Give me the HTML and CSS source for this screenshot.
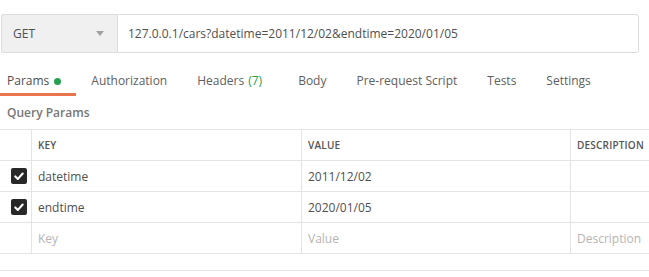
FILE: index.html
```html
<!DOCTYPE html>
<html>
<head>
<meta charset="utf-8">
<link rel="stylesheet" href="styles.css">
</head>
<body>
<div class="page">
  <div class="request-bar">
    <div class="method">
      <span class="method-name">GET</span>
      <span class="caret"></span>
    </div>
    <div class="url">127.0.0.1/cars?datetime=2011/12/02&amp;endtime=2020/01/05</div>
  </div>

  <div class="tabs">
    <div class="tab active">Params <span class="dot"></span></div>
    <div class="tab">Authorization</div>
    <div class="tab tab-headers">Headers <span class="count">(7)</span></div>
    <div class="tab">Body</div>
    <div class="tab">Pre-request Script</div>
    <div class="tab">Tests</div>
    <div class="tab">Settings</div>
  </div>

  <div class="section-title">Query Params</div>

  <div class="table">
    <div class="row head">
      <div class="cell check"></div>
      <div class="cell key">KEY</div>
      <div class="cell value">VALUE</div>
      <div class="cell desc">DESCRIPTION</div>
    </div>
    <div class="row">
      <div class="cell check"><span class="box"><svg viewBox="0 0 16 16" width="16" height="16"><path d="M4.3 8.4 L6.9 10.9 L11.7 5.5" fill="none" stroke="#fff" stroke-width="2.1" stroke-linecap="round" stroke-linejoin="round"/></svg></span></div>
      <div class="cell key">datetime</div>
      <div class="cell value">2011/12/02</div>
      <div class="cell desc"></div>
    </div>
    <div class="row">
      <div class="cell check"><span class="box"><svg viewBox="0 0 16 16" width="16" height="16"><path d="M4.3 8.4 L6.9 10.9 L11.7 5.5" fill="none" stroke="#fff" stroke-width="2.1" stroke-linecap="round" stroke-linejoin="round"/></svg></span></div>
      <div class="cell key">endtime</div>
      <div class="cell value">2020/01/05</div>
      <div class="cell desc"></div>
    </div>
    <div class="row placeholder">
      <div class="cell check"></div>
      <div class="cell key">Key</div>
      <div class="cell value">Value</div>
      <div class="cell desc">Description</div>
    </div>
  </div>
  <div class="bottom-line"></div>
</div>
</body>
</html>
```

FILE: styles.css
```css
* { box-sizing: border-box; }
html, body {
  margin: 0;
  padding: 0;
  background: #fff;
}
body {
  font-family: "Open Sans", "Liberation Sans", sans-serif;
  font-size: 12px;
  color: #505050;
  overflow: hidden;
}
.page {
  width: 649px;
}
.request-bar {
  display: flex;
  margin: 14px 0 0 1px;
  width: 638px;
  height: 39px;
}
.method {
  width: 116px;
  display: flex;
  align-items: center;
  justify-content: space-between;
  padding: 0 12px 0 11px;
  background: #f0f0f0;
  border: 1px solid #dcdcdc;
  border-right: none;
  border-radius: 3px 0 0 3px;
}
.method-name {
  color: #505050;
  font-size: 12px;
}
.caret {
  width: 0;
  height: 0;
  border-left: 4px solid transparent;
  border-right: 4px solid transparent;
  border-top: 5px solid #a0a0a0;
  margin-right: 1px;
}
.url {
  flex: 1;
  display: flex;
  align-items: center;
  padding-left: 10px;
  border: 1px solid #dcdcdc;
  border-radius: 0 3px 3px 0;
  color: #505050;
  font-size: 12px;
}
.tabs {
  display: flex;
  height: 43px;
}
.tab {
  display: flex;
  align-items: flex-start;
  padding: 20px 15px 0;
  height: 43px;
  color: #606060;
  font-size: 12px;
  line-height: 16px;
  white-space: nowrap;
}
.tab.active {
  padding-left: 7px;
  border-bottom: 3px solid #e8764a;
  color: #505050;
}
.tab.tab-headers {
  padding-right: 21px;
}
.dot {
  display: inline-block;
  width: 7px;
  height: 7px;
  border-radius: 50%;
  background: #26a150;
  margin: 5px 0 0 5px;
}
.count {
  color: #26a150;
  margin-left: 4px;
}
.section-title {
  height: 33px;
  padding: 9px 0 0 7px;
  font-size: 12px;
  line-height: 16px;
  font-weight: 600;
  color: #777;
}
.table {
  border-top: 1px solid #e4e4e4;
}
.row {
  display: grid;
  grid-template-columns: 31px 270px 269px 79px;
  height: 31px;
  border-bottom: 1px solid #e4e4e4;
}
.cell {
  display: flex;
  align-items: center;
  padding-left: 6px;
  border-left: 1px solid #e4e4e4;
  white-space: nowrap;
  overflow: hidden;
}
.cell.check {
  border-left: none;
  padding-left: 11px;
}
.row.head .cell {
  font-size: 10px;
  font-weight: 600;
  color: #555;
  letter-spacing: 0.2px;
}
.row.placeholder .cell { color: #b4b4b4; }
.box {
  width: 16px;
  height: 16px;
  background: #282828;
  border-radius: 2px;
  display: block;
}
.box svg { display: block; }
.bottom-line {
  margin-top: 16px;
  border-top: 1px solid #e4e4e4;
}
```
